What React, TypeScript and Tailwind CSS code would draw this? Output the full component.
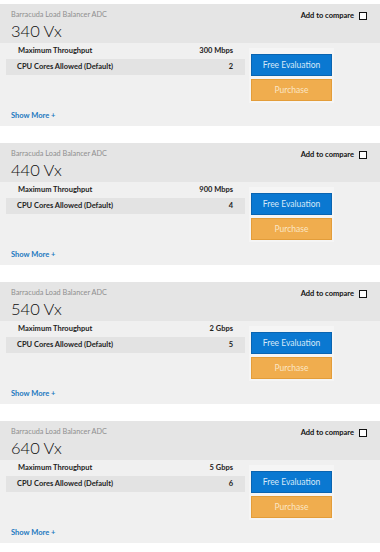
const products = [
	{ name: "340 Vx", throughput: "300 Mbps", cores: "2" },
	{ name: "440 Vx", throughput: "900 Mbps", cores: "4" },
	{ name: "540 Vx", throughput: "2 Gbps", cores: "5" },
	{ name: "640 Vx", throughput: "5 Gbps", cores: "6" },
];

const ProductCard = ({ name, throughput, cores }: { name: string; throughput: string; cores: string }) => {
	return (
		<div className="w-full">
			{/* ----- Header ----- */}
			<div className="h-[39px] bg-[#e5e5e5] flex justify-between pl-[11px] pr-[13px]">
				<div className="flex flex-col">
					<p className="text-[7.3px] leading-[10px] text-[#8f8f8f] mt-[6px]">Barracuda Load Balancer ADC</p>
					<h2 className="text-[16.5px] leading-[20px] font-light text-[#0d0d0d] mt-[1px]">{name}</h2>
				</div>
				<div className="flex items-center gap-[5px] h-[10px] mt-[7px]">
					<span className="text-[7.5px] font-bold text-[#111]">Add to compare</span>
					<span className="w-[8px] h-[8px] border-[1.5px] border-[#111] bg-white" />
				</div>
			</div>
			{/* ----- Body ----- */}
			<div className="h-[83px] bg-[#f0f0f0] flex flex-col">
				<div className="flex">
					<div className="w-[239px] ml-[6px] flex flex-col text-[7.5px] font-bold text-[#222]">
						<div className="h-[16px] flex items-center justify-between pl-[12px] pr-[12px]">
							<span>Maximum Throughput</span>
							<span>{throughput}</span>
						</div>
						<div className="h-[16px] bg-[#e3e3e3] flex items-center justify-between pl-[11px] pr-[12px]">
							<span>CPU Cores Allowed (Default)</span>
							<span>{cores}</span>
						</div>
					</div>
					<div className="ml-[4px] mt-[5px] w-[85px] bg-[#f5f5f5] px-[2px] pt-[6px] pb-[2px] flex flex-col gap-[3px]">
						<button className="h-[22px] w-[81px] bg-[#0a78d1] border border-[#0a64b0] text-[#d6e8f8] text-[8.5px] font-normal">
							Free Evaluation
						</button>
						<button className="h-[22px] w-[81px] bg-[#f0ad4e] border border-[#e39d3a] text-[#fbe5c4] text-[8.5px] font-normal">
							Purchase
						</button>
					</div>
				</div>
				<p className="mt-auto mb-[5px] ml-[11px] text-[7.5px] font-bold text-[#1b78bf]">Show More +</p>
			</div>
		</div>
	);
};

const App = () => {
	return (
		<div className="w-[380px] min-h-[552px] bg-white pt-[4px] flex flex-col gap-[17px] font-['Lato',sans-serif]">
			{products.map((p) => (
				<ProductCard key={p.name} {...p} />
			))}
		</div>
	);
};

export default App;
